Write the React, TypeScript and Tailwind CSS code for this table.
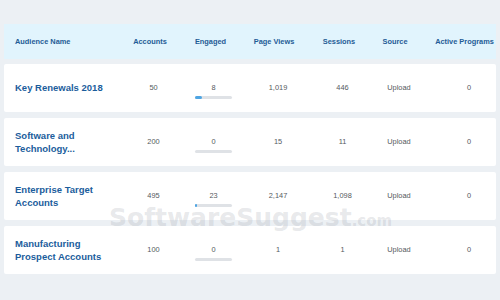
import React from "react";

type Row = {
  name: string;
  accounts: string;
  engaged: string;
  fill: number;
  views: string;
  sessions: string;
  source: string;
  active: string;
};

const rows: Row[] = [
  { name: "Key Renewals 2018", accounts: "50", engaged: "8", fill: 7, views: "1,019", sessions: "446", source: "Upload", active: "0" },
  { name: "Software and Technology...", accounts: "200", engaged: "0", fill: 0, views: "15", sessions: "11", source: "Upload", active: "0" },
  { name: "Enterprise Target Accounts", accounts: "495", engaged: "23", fill: 2, views: "2,147", sessions: "1,098", source: "Upload", active: "0" },
  { name: "Manufacturing Prospect Accounts", accounts: "100", engaged: "0", fill: 0, views: "1", sessions: "1", source: "Upload", active: "0" },
];

const grid = "grid grid-cols-[120px_59px_61px_68px_61px_52px_71px]";

export default function App() {
  return (
    <div
      className="relative w-[500px] h-[300px] overflow-hidden bg-[#ecf0f4] pt-[24px] px-[4px]"
      style={{ fontFamily: '"Liberation Sans", Arial, sans-serif' }}
    >
      <div className={`${grid} h-[35px] items-center bg-[#e1f4fd] text-[7.4px] font-bold text-[#1f5c96]`}>
        <div className="pl-[11px]">Audience Name</div>
        <div className="text-center pr-[7px]">Accounts</div>
        <div className="text-center pr-[6px]">Engaged</div>
        <div className="text-center pr-[8px]">Page Views</div>
        <div className="text-center pr-[7px]">Sessions</div>
        <div className="text-center pr-[8px]">Source</div>
        <div className="text-center pl-[8px] whitespace-nowrap">Active Programs</div>
      </div>

      <div className="mt-[5px] flex flex-col gap-[6px]">
        {rows.map((r) => (
          <div key={r.name} className={`${grid} h-[48px] items-center bg-white rounded-[2px] text-[7.4px] text-[#555a60]`}>
            <div className="pl-[11px] pr-[2px] text-[9.5px] leading-[13.5px] font-bold text-[#1b5d9c]">{r.name}</div>
            <div className="text-center">{r.accounts}</div>
            <div className="flex flex-col items-center pt-[6px]">
              <div className="leading-[9px]">{r.engaged}</div>
              <div className="mt-[4px] h-[3px] w-[37px] rounded-full bg-[#dfe2e6]">
                <div className="h-[3px] rounded-full bg-[#4ea5e3]" style={{ width: `${r.fill}px` }} />
              </div>
            </div>
            <div className="text-center">{r.views}</div>
            <div className="text-center">{r.sessions}</div>
            <div className="text-center">{r.source}</div>
            <div className="text-center pl-[17px]">{r.active}</div>
          </div>
        ))}
      </div>

      <div
        className="pointer-events-none absolute left-[109px] top-[203px] flex items-baseline text-[rgba(140,146,156,0.21)] whitespace-nowrap"
        style={{ fontFamily: '"DejaVu Sans", sans-serif' }}
      >
        <span className="text-[25px] font-bold leading-[30px]">SoftwareSuggest</span>
        <span className="text-[15px] font-bold leading-[30px]">.com</span>
      </div>
    </div>
  );
}
